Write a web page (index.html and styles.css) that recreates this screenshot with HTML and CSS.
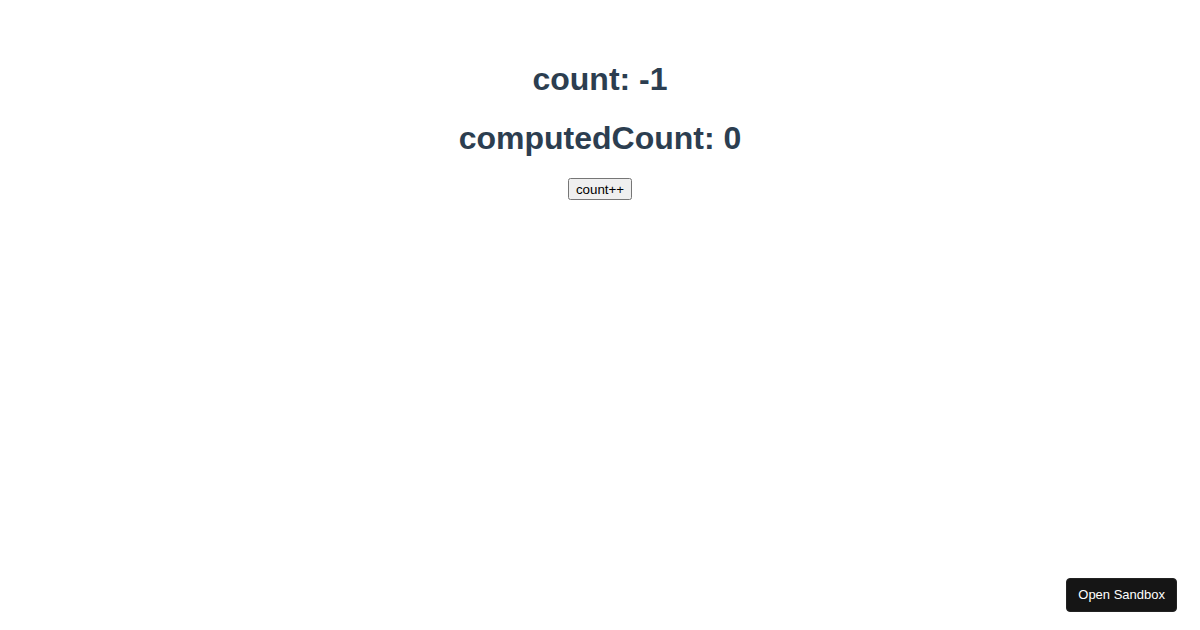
FILE: index.html
```html
<!DOCTYPE html>
<html lang="en">
<head>
<meta charset="utf-8">
<title>Counter</title>
<link rel="stylesheet" href="styles.css">
</head>
<body>
<main class="app">
  <h1 class="app-value">count: -1</h1>
  <h1 class="app-value">computedCount: 0</h1>
  <button class="app-button" type="button">count++</button>
</main>
<a class="sandbox-link" href="#">Open Sandbox</a>
</body>
</html>
```

FILE: styles.css
```css
body {
  margin: 0;
  background: #fff;
  font-family: "Liberation Sans", Arial, sans-serif;
}

.app {
  padding-top: 60px;
  text-align: center;
  color: #2c3e50;
}

.app-value {
  margin: 0 0 21px;
  font-size: 32px;
  line-height: 38px;
}

.app-button {
  height: 22px;
  font-family: inherit;
}

.sandbox-link {
  position: fixed;
  right: 23px;
  bottom: 18px;
  box-sizing: border-box;
  padding: 8px 11px;
  border: 1px solid #222;
  border-radius: 4px;
  background: #151515;
  color: #fff;
  font-size: 13px;
  line-height: 16px;
  text-decoration: none;
}
```
